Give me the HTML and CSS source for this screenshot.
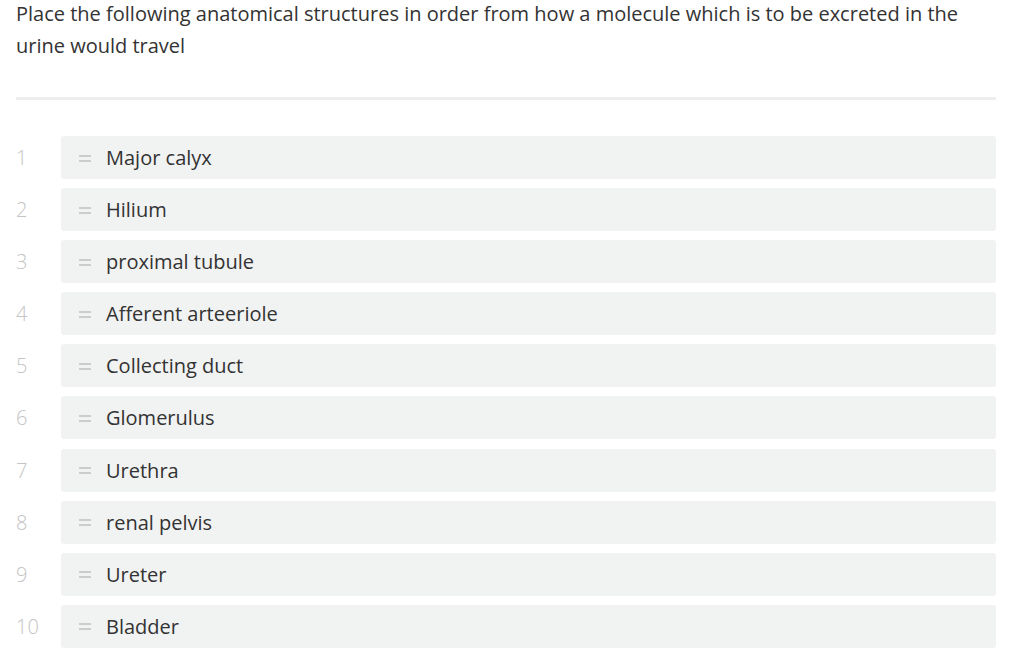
FILE: index.html
```html
<!DOCTYPE html>
<html>
<head>
<meta charset="utf-8">
<link rel="stylesheet" href="styles.css">
</head>
<body>
<div class="page">
  <p class="question">Place the following anatomical structures in order from how a molecule which is to be excreted in the urine would travel</p>
  <hr class="divider">
  <ol class="list">
    <li class="row"><span class="num">1</span><div class="item"><span class="handle"></span><span class="label">Major calyx</span></div></li>
    <li class="row"><span class="num">2</span><div class="item"><span class="handle"></span><span class="label">Hilium</span></div></li>
    <li class="row"><span class="num">3</span><div class="item"><span class="handle"></span><span class="label">proximal tubule</span></div></li>
    <li class="row"><span class="num">4</span><div class="item"><span class="handle"></span><span class="label">Afferent arteeriole</span></div></li>
    <li class="row"><span class="num">5</span><div class="item"><span class="handle"></span><span class="label">Collecting duct</span></div></li>
    <li class="row"><span class="num">6</span><div class="item"><span class="handle"></span><span class="label">Glomerulus</span></div></li>
    <li class="row"><span class="num">7</span><div class="item"><span class="handle"></span><span class="label">Urethra</span></div></li>
    <li class="row"><span class="num">8</span><div class="item"><span class="handle"></span><span class="label">renal pelvis</span></div></li>
    <li class="row"><span class="num">9</span><div class="item"><span class="handle"></span><span class="label">Ureter</span></div></li>
    <li class="row"><span class="num">10</span><div class="item"><span class="handle"></span><span class="label">Bladder</span></div></li>
  </ol>
</div>
</body>
</html>
```
FILE: styles.css
```css
html, body {
  margin: 0;
  padding: 0;
  background: #fff;
}
body {
  font-family: "Open Sans", "Liberation Sans", sans-serif;
  color: #333;
}
.page {
  padding: 0 28px 0 16px;
}
.question {
  margin: -2px 0 0 0;
  font-size: 20px;
  line-height: 32px;
  color: #333;
}
.divider {
  border: 0;
  height: 3px;
  background: #eeeeee;
  margin: 35px 0 36px 0;
}
.list {
  list-style: none;
  margin: 0;
  padding: 0;
  display: flex;
  flex-direction: column;
  gap: 9.1px;
}
.row {
  display: flex;
  align-items: center;
}
.num {
  width: 45px;
  flex: none;
  font-size: 20px;
  font-weight: 300;
  color: #c4c4c4;
}
.item {
  flex: 1;
  height: 43px;
  background: #f1f2f2;
  border-radius: 3px;
  display: flex;
  align-items: center;
  padding-left: 18px;
}
.handle {
  width: 12px;
  height: 7px;
  border-top: 2px solid #cccccc;
  border-bottom: 2px solid #cccccc;
  box-sizing: border-box;
  margin-right: 15px;
  margin-top: 1px;
}
.label {
  font-size: 20px;
  color: #333;
}
```
